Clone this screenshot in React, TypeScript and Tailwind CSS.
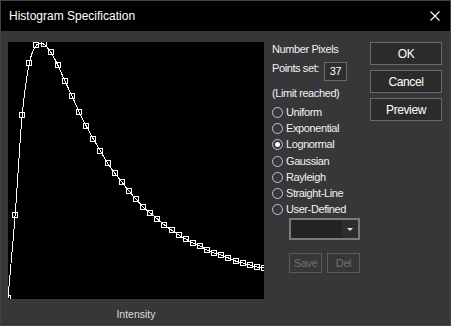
import React from 'react';

// measured curve heights (px from chart top), one per control point
const POINTS_Y = [
  256, 173, 73, 21, 3, 2, 10, 23, 39, 54, 70, 84, 97, 109, 121, 131, 140, 149, 157,
  165, 171, 177, 183, 188, 193, 197, 201, 204, 208, 211, 213, 216, 219, 221, 223, 225, 226,
];

const W = 256;
const H = 257;

const pts = POINTS_Y.map((y, i) => ({ x: (i * W) / (POINTS_Y.length - 1), y }));

// catmull-rom through the control points
const curvePath = () => {
  let d = `M ${pts[0].x} ${pts[0].y}`;
  for (let i = 0; i < pts.length - 1; i++) {
    const p0 = pts[Math.max(i - 1, 0)];
    const p1 = pts[i];
    const p2 = pts[i + 1];
    const p3 = pts[Math.min(i + 2, pts.length - 1)];
    const c1x = p1.x + (p2.x - p0.x) / 6;
    const c1y = p1.y + (p2.y - p0.y) / 6;
    const c2x = p2.x - (p3.x - p1.x) / 6;
    const c2y = p2.y - (p3.y - p1.y) / 6;
    d += ` C ${c1x} ${Math.max(c1y, 1)} ${c2x} ${Math.max(c2y, 1)} ${p2.x} ${p2.y}`;
  }
  return d;
};

const Chart: React.FC = () => (
  <div className="w-[256px] h-[257px] bg-black overflow-hidden">
    <svg width={W} height={H} viewBox={`0 0 ${W} ${H}`} shapeRendering="crispEdges">
      <path d={curvePath()} fill="none" stroke="#fff" strokeWidth={1} />
      {pts.map((p, i) => (
        <rect
          key={i}
          x={Math.round(p.x) - 2.5}
          y={Math.round(p.y) - 2.5}
          width={5}
          height={5}
          fill="none"
          stroke="#fff"
          strokeWidth={1}
        />
      ))}
    </svg>
  </div>
);

const Radio: React.FC<{ label: string; checked?: boolean }> = ({ label, checked }) => (
  <div className="h-[16.3px] flex items-center">
    <span className="w-[11px] h-[11px] rounded-full border border-[#c8c8c8] flex items-center justify-center">
      {checked && <span className="w-[5px] h-[5px] rounded-full bg-white" />}
    </span>
    <span className="ml-[3px] leading-[13px]">{label}</span>
  </div>
);

const Button: React.FC<{ children: React.ReactNode }> = ({ children }) => (
  <button className="w-[72px] h-[23px] bg-[#2b2b2b] border border-[#6b6b6b] text-[12px] tracking-[-0.4px] text-white flex items-center justify-center">
    {children}
  </button>
);

const App: React.FC = () => {
  const options = ['Uniform', 'Exponential', 'Lognormal', 'Gaussian', 'Rayleigh', 'Straight-Line', 'User-Defined'];

  return (
    <div className="w-[451px] h-[326px] border border-[#434346] bg-[#37373a] flex flex-col font-['Liberation_Sans',Arial,sans-serif] text-[#f2f2f2] overflow-hidden">
      {/* Title bar */}
      <div className="h-[30px] bg-black flex items-center justify-between pl-2 pr-[10px] shrink-0">
        <span className="text-[12px] text-white">Histogram Specification</span>
        <svg width="10" height="10" viewBox="0 0 10 10">
          <path d="M0.5 0.5 L9.5 9.5 M9.5 0.5 L0.5 9.5" stroke="#fff" strokeWidth="1.1" />
        </svg>
      </div>

      <div className="flex pt-[11px]">
        {/* Chart column */}
        <div className="ml-[7px] flex flex-col items-center">
          <Chart />
          <span className="mt-[9px] text-[10.5px] leading-[13px] text-[#dcdcdc]">Intensity</span>
        </div>

        {/* Options column */}
        <div className="ml-[8px] w-[90px] flex flex-col text-[11px] tracking-[-0.4px]">
          <div className="h-[14px] leading-[14px]">Number Pixels</div>
          <div className="mt-[6px] h-[19px] flex items-start">
            <span className="leading-[13px]">Points set:</span>
            <span className="ml-[5px] w-[23px] h-[19px] border border-[#6b6b6b] bg-[#2e2e30] flex items-center justify-center text-white">
              37
            </span>
          </div>
          <div className="mt-[5px] leading-[14px]">(Limit reached)</div>
          <div className="mt-[4px] flex flex-col">
            {options.map((o) => (
              <Radio key={o} label={o} checked={o === 'Lognormal'} />
            ))}
          </div>
          <div className="ml-[17px] w-[71px] h-[22px] border-2 border-[#7a7a7a] bg-[#232323] flex">
            <div className="flex-1" />
            <div className="w-[16px] bg-[#2d2d2d] flex items-center justify-center">
              <svg width="6" height="3" viewBox="0 0 6 3">
                <path d="M0 0 H6 L3 3 Z" fill="#e0e0e0" />
              </svg>
            </div>
          </div>
          <div className="ml-[17px] mt-[13px] flex gap-[5px]">
            <button className="w-[33px] h-[20px] border border-[#5a5a5c] text-[11px] text-[#707073] flex items-center justify-center">
              Save
            </button>
            <button className="w-[33px] h-[20px] border border-[#5a5a5c] text-[11px] text-[#707073] flex items-center justify-center">
              Del
            </button>
          </div>
        </div>

        {/* Buttons column */}
        <div className="ml-[8px] flex flex-col gap-[5px]">
          <Button>OK</Button>
          <Button>Cancel</Button>
          <Button>Preview</Button>
        </div>
      </div>
    </div>
  );
};

export default App;
